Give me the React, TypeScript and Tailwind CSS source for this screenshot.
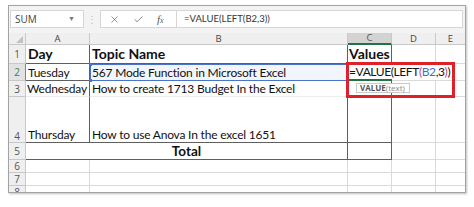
import { X, Check } from 'lucide-react';

const DARK = 'border-[#5f5f5f]';

export default function App() {
  return (
    <div className="w-[474px] h-[207px] bg-white relative overflow-hidden font-['Lato',sans-serif] text-[#111]">
      <div className="ml-[8px] mt-[5px] w-[458px] h-[188px] border border-[#a3a3a3] shadow-[1px_1px_2px_rgba(0,0,0,0.25)] bg-white flex flex-col overflow-hidden">
        {/* formula bar */}
        <div className="h-[27px] shrink-0 bg-[#f3f3f3] flex items-start pt-[4px] pl-[1px] pr-[2px]">
          <div className="w-[74px] h-[18px] bg-white border border-[#d6d6d6] flex items-center justify-between pl-[4px] pr-[8px] text-[10px] text-[#444] font-['Open_Sans',sans-serif]">
            <span>SUM</span>
            <span className="text-[7px] text-[#777]">▼</span>
          </div>
          <div className="w-[16px] h-[18px] flex items-center justify-center text-[10px] text-[#bdbdbd]">⋮</div>
          <div className="w-[77px] h-[18px] bg-white border border-[#d6d6d6] flex items-center pl-[8px] gap-[13px] text-[#5a5a5a]">
            <X size={11} strokeWidth={1.4} />
            <Check size={11} strokeWidth={1.6} />
            <span className="font-['Liberation_Serif',serif] italic text-[11px] leading-none">f<span className="text-[8px]">x</span></span>
          </div>
          <div className="flex-1 h-[18px] bg-white border border-l-0 border-[#d6d6d6] flex items-center pl-[7px] text-[9.5px] text-[#333]">
            =VALUE(LEFT(B2,3))
          </div>
        </div>

        {/* column headers */}
        <div className="h-[12px] shrink-0 flex text-[9.5px] text-[#444] font-['Open_Sans',sans-serif] leading-none bg-[#efefef]">
          <div className="w-[17px] border-r border-b border-[#c8c8c8] relative">
            <svg className="absolute right-[2px] bottom-[1px]" width="7" height="7" viewBox="0 0 7 7"><polygon points="7,0 7,7 0,7" fill="#c2c2c2" /></svg>
          </div>
          <div className="w-[64px] border-r border-b border-[#c8c8c8] flex items-center justify-center">A</div>
          <div className="w-[258px] border-r border-b border-[#c8c8c8] flex items-center justify-center">B</div>
          <div className="w-[44px] bg-[#d3d3d3] border-r border-[#c8c8c8] border-b-2 border-b-[#217346] flex items-center justify-center text-[#555]">C</div>
          <div className="w-[44px] border-r border-b border-[#c8c8c8] flex items-center justify-center">D</div>
          <div className="flex-1 border-b border-[#c8c8c8] flex items-center justify-center">E</div>
        </div>

        {/* row 1 */}
        <div className="h-[19px] shrink-0 flex">
          <RowHead n="1" />
          <div className={`w-[64px] border-r border-b ${DARK} pl-[2px] flex items-end font-bold text-[14px] leading-[18px]`}>Day</div>
          <div className={`w-[258px] border-r border-b ${DARK} pl-[2px] flex items-end font-bold text-[14px] leading-[18px]`}>Topic Name</div>
          <div className={`w-[44px] border-r border-b ${DARK} pl-[1px] flex items-end font-bold text-[14px] leading-[18px]`}>Values</div>
          <Grid w="w-[44px]" />
          <Grid last />
        </div>

        {/* row 2 */}
        <div className="h-[17px] shrink-0 flex tracking-[-0.2px]">
          <div className="w-[17px] bg-[#e2e2e2] border-r border-r-[#6f8f78] border-b border-b-[#c8c8c8] flex items-center justify-center text-[10px] text-[#3f7a55] font-['Open_Sans',sans-serif]">2</div>
          <div className={`w-[64px] border-r border-b ${DARK} pl-[2px] flex items-end text-[12px] leading-[15px]`}>Tuesday</div>
          <div className="w-[258px] border border-[#4a74c9] bg-[#f2f5fb] pl-[1px] flex items-end text-[12px] leading-[14px] relative">
            567 Mode Function in Microsoft Excel
            <span className="absolute -left-[2px] -top-[2px] w-[3px] h-[3px] bg-[#4a74c9]" />
            <span className="absolute -right-[2px] -top-[2px] w-[3px] h-[3px] bg-[#4a74c9]" />
            <span className="absolute -left-[2px] -bottom-[2px] w-[3px] h-[3px] bg-[#4a74c9]" />
            <span className="absolute -right-[2px] -bottom-[2px] w-[3px] h-[3px] bg-[#4a74c9]" />
          </div>
          <div className="w-[44px] border-b-2 border-b-[#217346] relative z-10">
            <span className="absolute left-[1px] bottom-[0px] whitespace-nowrap text-[12px] tracking-[-0.4px] leading-[15px]">
              =VALUE(LEFT<span className="text-[#c0457a]">(</span><span className="text-[#3f6fc7]">B2</span>,3<span className="text-[#c0457a]">)</span>)
            </span>
          </div>
          <div className="w-[44px] border-b border-[#dadada]" />
          <div className="flex-1 border-b border-[#dadada]" />
        </div>

        {/* row 3 */}
        <div className="h-[16px] shrink-0 flex tracking-[-0.2px]">
          <RowHead n="3" />
          <div className={`w-[64px] border-r ${DARK} border-b border-b-[#ececec] pl-[1px] flex items-end text-[12px] leading-[15px] overflow-hidden whitespace-nowrap`}>Wednesday</div>
          <div className={`w-[258px] border-r ${DARK} border-b border-b-[#ececec] pl-[2px] flex items-end text-[12px] leading-[15px]`}>How to create 1713 Budget In the Excel</div>
          <div className={`w-[44px] border-r ${DARK} border-b border-b-[#ececec]`} />
          <Grid w="w-[44px]" />
          <Grid last />
        </div>

        {/* row 4 */}
        <div className="h-[46px] shrink-0 flex tracking-[-0.2px]">
          <RowHead n="4" end />
          <div className={`w-[64px] border-r border-b ${DARK} pl-[2px] flex items-end text-[12px] leading-[15px]`}>Thursday</div>
          <div className={`w-[258px] border-r border-b ${DARK} pl-[2px] flex items-end text-[12px] leading-[15px]`}>How to use Anova In the excel 1651</div>
          <div className={`w-[44px] border-r border-b ${DARK}`} />
          <Grid w="w-[44px]" />
          <Grid last />
        </div>

        {/* row 5 */}
        <div className="h-[17px] shrink-0 flex">
          <RowHead n="5" />
          <div className={`w-[322px] border-r border-b ${DARK} flex items-end justify-center font-bold text-[13.5px] leading-[16px]`}>Total</div>
          <div className={`w-[44px] border-r border-b ${DARK}`} />
          <Grid w="w-[44px]" />
          <Grid last />
        </div>

        {/* rows 6-8 */}
        {['6', '7'].map(n => (
          <div key={n} className="h-[13px] shrink-0 flex">
            <RowHead n={n} />
            <Grid w="w-[64px]" />
            <Grid w="w-[258px]" />
            <Grid w="w-[44px]" />
            <Grid w="w-[44px]" />
            <Grid last />
          </div>
        ))}
        <div className="flex-1 flex overflow-hidden">
          <div className="w-[17px] bg-[#efefef] border-r border-[#c8c8c8] flex justify-center text-[10px] leading-[13px] text-[#555] font-['Open_Sans',sans-serif]">8</div>
          <div className="w-[64px] border-r border-[#dadada]" />
          <div className="w-[258px] border-r border-[#dadada]" />
          <div className="w-[44px] border-r border-[#dadada]" />
          <div className="w-[44px] border-r border-[#dadada]" />
          <div className="flex-1" />
        </div>
      </div>

      {/* red annotation box */}
      <div className="absolute left-[346px] top-[62px] w-[109px] h-[36px] border-[3px] border-[#e0202b] z-20" />

      {/* function tooltip */}
      <div className="absolute left-[356px] top-[83px] w-[54px] h-[10px] bg-white border border-[#c9c9c9] flex items-center pl-[3px] text-[8px] leading-none font-['Open_Sans',sans-serif] z-30">
        <span className="font-bold text-[#555]">VALUE</span>
        <span className="text-[#888]">(text)</span>
      </div>
    </div>
  );
}

function RowHead({ n, end }: { n: string; end?: boolean }) {
  return (
    <div className={`w-[17px] shrink-0 bg-[#efefef] border-r border-b border-[#c8c8c8] flex justify-center text-[10px] leading-[12px] text-[#555] font-['Open_Sans',sans-serif] ${end ? 'items-end' : 'items-center'}`}>
      {n}
    </div>
  );
}

function Grid({ w, last }: { w?: string; last?: boolean }) {
  return <div className={`${last ? 'flex-1' : w} border-b border-[#dadada] ${last ? '' : 'border-r'}`} />;
}
